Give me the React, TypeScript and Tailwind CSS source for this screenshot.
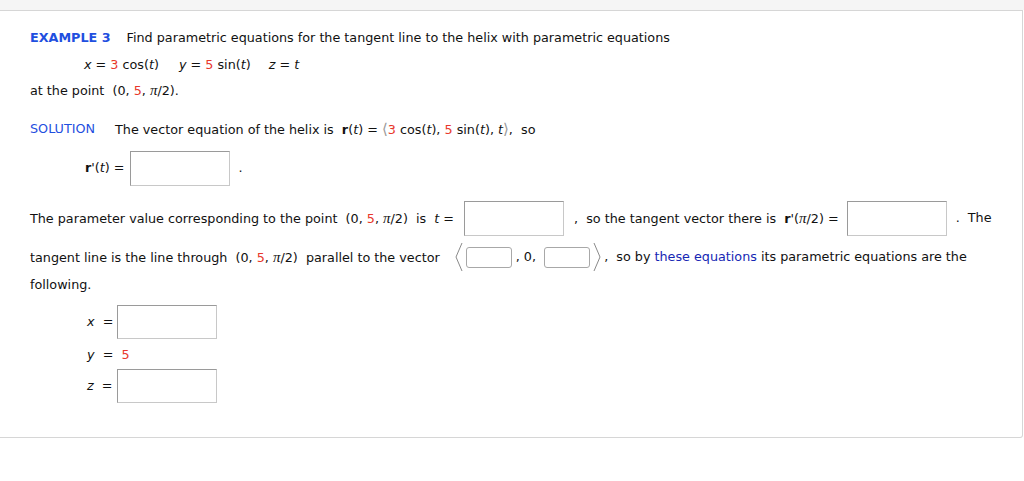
import React from "react";

const R = ({ children }: { children: React.ReactNode }) => (
  <span className="text-[#e8382c]">{children}</span>
);
const I = ({ children }: { children: React.ReactNode }) => (
  <span className="italic">{children}</span>
);
const Pi = () => (
  <span className="italic font-['Liberation_Serif',serif] text-[15px]">π</span>
);
const BoldR = () => <span className="font-bold">r</span>;

const Box = ({ w, h, cls = "" }: { w: number; h: number; cls?: string }) => (
  <span
    className={`inline-block bg-white border border-[#9a9a9a] border-r-[#c8c8c8] border-b-[#c8c8c8] ${cls}`}
    style={{ width: w, height: h }}
  />
);

const SmallBox = ({ w }: { w: number }) => (
  <span
    className="inline-block bg-white border border-[#a8a8a8] rounded-[3px]"
    style={{ width: w, height: 21 }}
  />
);

const BigAngle = ({ right = false }: { right?: boolean }) => (
  <svg width="10" height="30" viewBox="0 0 10 30" className="inline-block">
    <polyline
      points={right ? "2,1 8,15 2,29" : "8,1 2,15 8,29"}
      fill="none"
      stroke="#8a8a8a"
      strokeWidth="1"
    />
  </svg>
);

export default function App() {
  return (
    <div className="w-[1024px] h-[481px] bg-white font-['DejaVu_Sans','Verdana',sans-serif] text-[12.75px] text-[#111] overflow-hidden">
      <div className="h-[10px] bg-[#f5f5f5]" />
      <div className="w-[1023px] bg-white border-t border-r border-b border-[#d6d6d6] rounded-br-[3px] pl-[30px]">
        <div className="mt-[17px] h-[20px] flex items-center whitespace-pre">
          <span className="font-bold text-[#1f4fe0]">EXAMPLE 3</span>
          <span className="ml-[16px]">
            Find parametric equations for the tangent line to the helix with parametric equations
          </span>
        </div>
        <div className="mt-[7px] h-[20px] flex items-center whitespace-pre pl-[54px]">
          <span>
            <I>x</I> = <R>3</R> cos(<I>t</I>)
          </span>
          <span className="ml-[20px]">
            <I>y</I> = <R>5</R> sin(<I>t</I>)
          </span>
          <span className="ml-[18px]">
            <I>z</I> = <I>t</I>
          </span>
        </div>
        <div className="mt-[5px] h-[20px] flex items-center whitespace-pre">
          <span>
            at the point  (0, <R>5</R>, <Pi />/2).
          </span>
        </div>
        <div className="mt-[19px] h-[20px] flex items-center whitespace-pre">
          <span className="text-[#1f4fe0]">SOLUTION</span>
          <span className="ml-[20px]">
            The vector equation of the helix is  <BoldR />(<I>t</I>) ={" "}
            <span className="text-[#999] text-[15px]">⟨</span>
            <R>3</R> cos(<I>t</I>), <R>5</R> sin(<I>t</I>), <I>t</I>
            <span className="text-[#999] text-[15px]">⟩</span>,  so
          </span>
        </div>
        <div className="mt-[11px] h-[36px] flex items-center whitespace-pre pl-[55px]">
          <span>
            <BoldR />'(<I>t</I>) =
          </span>
          <Box w={100} h={35} cls="ml-[5px]" />
          <span className="ml-[9px]">.</span>
        </div>
        <div className="mt-[14px] h-[36px] flex items-center whitespace-pre">
          <span>
            The parameter value corresponding to the point  (0, <R>5</R>, <Pi />/2)  is  <I>t</I> =
          </span>
          <Box w={100} h={35} cls="ml-[10px]" />
          <span className="ml-[10px]">,  so the tangent vector there is  <BoldR />'(<Pi />/2) =</span>
          <Box w={100} h={35} cls="ml-[8px]" />
          <span className="ml-[9px]">.  The</span>
        </div>
        <div className="mt-[6px] h-[30px] flex items-center whitespace-pre">
          <span>
            tangent line is the line through  (0, <R>5</R>, <Pi />/2)  parallel to the vector
          </span>
          <span className="ml-[14px] mr-[2px] flex items-center">
            <BigAngle />
          </span>
          <SmallBox w={46} />
          <span> , 0,  </span>
          <SmallBox w={46} />
          <span className="ml-[2px] flex items-center">
            <BigAngle right />
          </span>
          <span className="ml-[2px]">,  so by <span className="text-[#1627b4]">these equations</span> its parametric equations are the</span>
        </div>
        <div className="mt-[3px] h-[20px] flex items-center whitespace-pre">
          <span>following.</span>
        </div>
        <div className="mt-[9px] h-[35px] flex items-center whitespace-pre pl-[57px]">
          <span>
            <I>x</I>  =
          </span>
          <Box w={100} h={34} cls="ml-[4px]" />
        </div>
        <div className="mt-[6px] h-[20px] flex items-center whitespace-pre pl-[57px]">
          <span>
            <I>y</I>  =  <R>5</R>
          </span>
        </div>
        <div className="mt-[4px] h-[34px] flex items-center whitespace-pre pl-[57px]">
          <span>
            <I>z</I>  =
          </span>
          <Box w={100} h={34} cls="ml-[4px]" />
        </div>
        <div className="h-[34px]" />
      </div>
    </div>
  );
}
